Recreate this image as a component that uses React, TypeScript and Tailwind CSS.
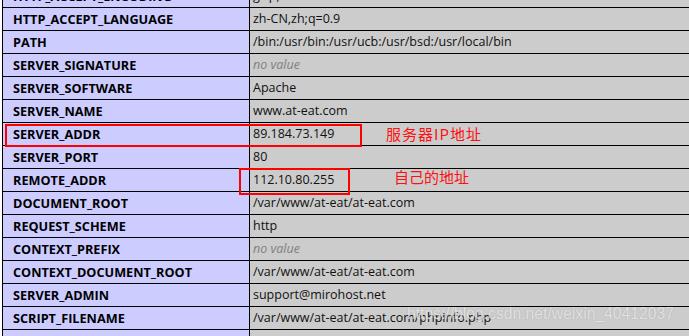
import React from "react";

type Row = { k: string; v: string; none?: boolean };

const rows: Row[] = [
  { k: "HTTP_ACCEPT_ENCODING", v: "gzip, deflate" },
  { k: "HTTP_ACCEPT_LANGUAGE", v: "zh-CN,zh;q=0.9" },
  { k: "PATH", v: "/bin:/usr/bin:/usr/ucb:/usr/bsd:/usr/local/bin" },
  { k: "SERVER_SIGNATURE", v: "no value", none: true },
  { k: "SERVER_SOFTWARE", v: "Apache" },
  { k: "SERVER_NAME", v: "www.at-eat.com" },
  { k: "SERVER_ADDR", v: "89.184.73.149" },
  { k: "SERVER_PORT", v: "80" },
  { k: "REMOTE_ADDR", v: "112.10.80.255" },
  { k: "DOCUMENT_ROOT", v: "/var/www/at-eat/at-eat.com" },
  { k: "REQUEST_SCHEME", v: "http" },
  { k: "CONTEXT_PREFIX", v: "no value", none: true },
  { k: "CONTEXT_DOCUMENT_ROOT", v: "/var/www/at-eat/at-eat.com" },
  { k: "SERVER_ADMIN", v: "support@mirohost.net" },
  { k: "SCRIPT_FILENAME", v: "/var/www/at-eat/at-eat.com/phpinfo.php" },
  { k: "REMOTE_PORT", v: "52431" },
];

export default function App() {
  return (
    <div className="relative w-[689px] h-[336px] overflow-hidden bg-white text-[#000]" style={{ fontFamily: '"Open Sans", "Noto Sans", sans-serif' }}>
      <div className="ml-[2px] mt-[-15px] w-[760px] border-l border-black">
        {rows.map((r) => (
          <div key={r.k} className="flex h-[23px] border-b border-black">
            <div className="flex w-[247px] shrink-0 items-center border-r border-black bg-[#ccccff] pl-[10px] text-[12.7px] font-bold leading-none">
              {r.k}
            </div>
            <div className={"flex flex-1 items-center bg-[#cccccc] pl-[3px] text-[12.5px] leading-none " + (r.none ? "italic text-[#808080]" : "text-[#111]")}>
              {r.v}
            </div>
          </div>
        ))}
      </div>

      <div className="absolute left-[5px] top-[124px] h-[23px] w-[357px] border-2 border-[#ff0000]" />
      <div className="absolute left-[239px] top-[168px] h-[27px] w-[111px] border-2 border-[#ff0000]" />

      <div className="absolute left-[386px] top-[126px] text-[15px] leading-none text-[#ff1010] tracking-[1px]" style={{ fontFamily: '"Noto Sans CJK SC", sans-serif' }}>
        服务器IP地址
      </div>
      <div className="absolute left-[394px] top-[169px] text-[15px] leading-none text-[#ff1010]" style={{ fontFamily: '"Noto Sans CJK SC", sans-serif' }}>
        自己的地址
      </div>

      <div className="absolute left-[407px] top-[306px] text-[15.7px] leading-none text-white/70" style={{ fontFamily: '"Liberation Sans", Arial, sans-serif', textShadow: "0 0 1px rgba(120,120,120,0.6)" }}>
        https://blog.csdn.net/weixin_40412037
      </div>
    </div>
  );
}
